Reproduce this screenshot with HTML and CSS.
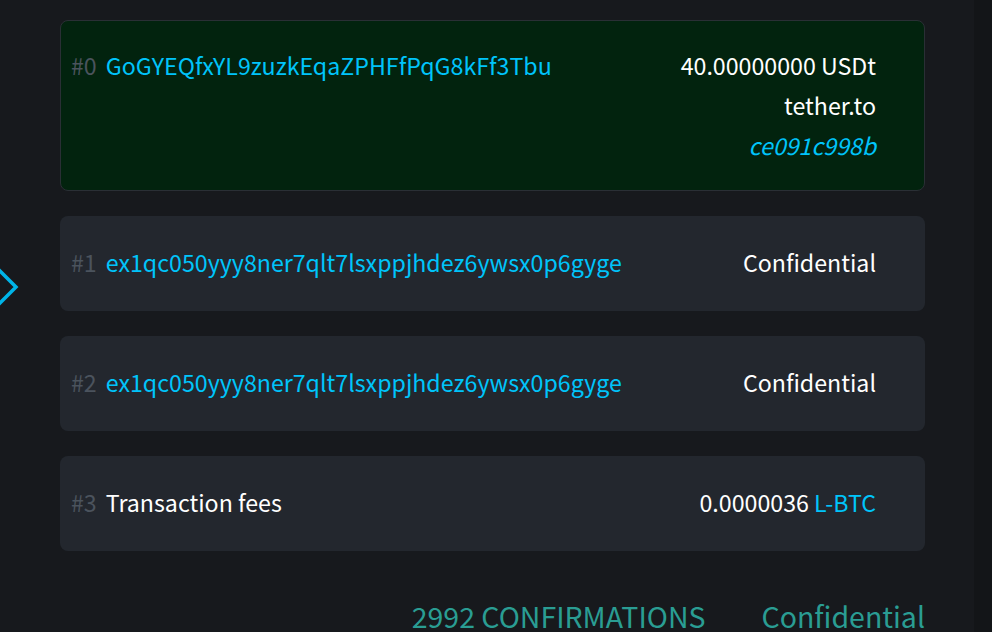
FILE: index.html
```html
<!DOCTYPE html>
<html>
<head>
<meta charset="utf-8">
<link rel="stylesheet" href="styles.css">
</head>
<body>
<div class="page">
  <main class="main">
    <svg class="chevron" width="22" height="44" viewBox="0 0 22 44">
      <polyline points="-3,3 16,22 -3,41" fill="none" stroke="#00b4e8" stroke-width="3.5"/>
    </svg>
    <div class="outs">
      <div class="card card-green">
        <div class="left"><span class="idx">#0</span><span class="addr">GoGYEQfxYL9zuzkEqaZPHFfPqG8kFf3Tbu</span></div>
        <div class="right">
          <div class="line">40.00000000 USDt</div>
          <div class="line">tether.to</div>
          <div class="line asset">ce091c998b</div>
        </div>
      </div>
      <div class="card">
        <div class="left"><span class="idx">#1</span><span class="addr">ex1qc050yyy8ner7qlt7lsxppjhdez6ywsx0p6gyge</span></div>
        <div class="right"><div class="line">Confidential</div></div>
      </div>
      <div class="card">
        <div class="left"><span class="idx">#2</span><span class="addr">ex1qc050yyy8ner7qlt7lsxppjhdez6ywsx0p6gyge</span></div>
        <div class="right"><div class="line">Confidential</div></div>
      </div>
      <div class="card">
        <div class="left"><span class="idx">#3</span><span class="fee">Transaction fees</span></div>
        <div class="right"><div class="line">0.0000036 <span class="unit">L-BTC</span></div></div>
      </div>
    </div>
    <div class="footer">
      <span>2992 CONFIRMATIONS</span>
      <span>Confidential</span>
    </div>
  </main>
  <aside class="strip"></aside>
</div>
</body>
</html>
```

FILE: styles.css
```css
html, body {
  margin: 0;
  padding: 0;
  background: #17191d;
  font-family: "Noto Sans CJK JP", "Open Sans", sans-serif;
  color: #ffffff;
  overflow: hidden;
}
.page {
  display: flex;
  width: 992px;
  height: 632px;
  overflow: hidden;
}
.main {
  position: relative;
  width: 974px;
  flex: none;
  padding: 20px 49px 0 60px;
  box-sizing: border-box;
}
.strip {
  flex: 1;
  background: #131518;
}
.chevron {
  position: absolute;
  left: 0;
  top: 265px;
}
.outs {
  display: flex;
  flex-direction: column;
  gap: 25px;
}
.card {
  display: flex;
  justify-content: space-between;
  align-items: flex-start;
  background: #23272e;
  border-radius: 8px;
  padding: 27px 49px 29px 11px;
  font-size: 23.2px;
  line-height: 39px;
}
.card-green {
  background: #02230e;
  border: 1px solid #2a2f35;
  padding: 24px 48px 25px 10px;
  line-height: 40px;
}
.left {
  display: flex;
  gap: 9px;
}
.idx {
  color: #4b535d;
}
.addr {
  color: #00c4fa;
}
.right {
  text-align: right;
}
.asset {
  color: #00c4fa;
  font-style: italic;
}
.unit {
  color: #00c4fa;
}
.footer {
  display: flex;
  justify-content: flex-end;
  gap: 56px;
  margin-top: 45px;
  color: #2a9d93;
  font-size: 28.5px;
  line-height: 40px;
}
```
